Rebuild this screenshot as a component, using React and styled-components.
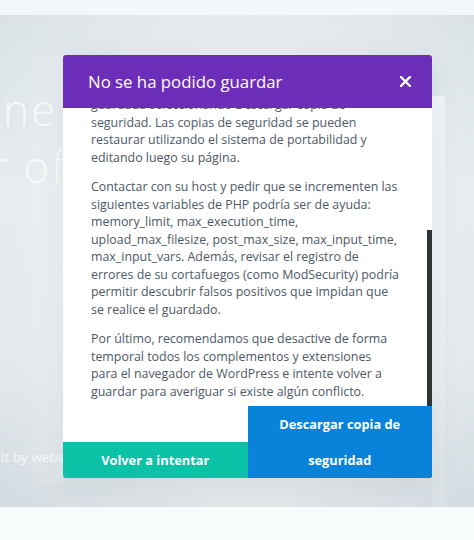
import React, { useLayoutEffect, useRef } from 'react'
import styled, { createGlobalStyle } from 'styled-components'

const GlobalStyle = createGlobalStyle`
  html, body {
    margin: 0;
    padding: 0;
  }
  body {
    width: 474px;
    height: 540px;
    overflow: hidden;
    background: #f6f9fb;
    font-family: "Open Sans", "Noto Sans", sans-serif;
  }
`

const Page = styled.div`
  width: 474px;
  height: 540px;
  padding-top: 15px;
  box-sizing: border-box;
  background: linear-gradient(180deg, #f3f7f9, #f8fbfc);
`

const Screen = styled.section`
  position: relative;
  height: 492px;
  overflow: hidden;
  display: flex;
  flex-direction: column;
  background:
    linear-gradient(180deg, rgba(244, 249, 251, 0.75), rgba(244, 249, 251, 0.1)) 432px 81px / 13px 410px no-repeat,
    linear-gradient(90deg, rgba(255, 255, 255, 0), rgba(255, 255, 255, 0.18)) 25px 40px / 38px 430px no-repeat,
    linear-gradient(90deg, rgba(255, 255, 255, 0) 0%, rgba(255, 255, 255, 0.3) 45%, rgba(255, 255, 255, 0.3) 60%, rgba(255, 255, 255, 0) 100%),
    linear-gradient(180deg, #dbe2e6 0%, #e6ecef 35%, #e3e9ed 70%, #d4dbe0 100%);
`

const Hero = styled.h1`
  margin: 0 0 0 ${p => p.$shift}px;
  padding-top: 66px;
  font-size: 44px;
  line-height: 57px;
  font-weight: 300;
  letter-spacing: 2px;
  color: rgba(255, 255, 255, 0.75);
  white-space: nowrap;
`

const HeroLine = styled.span`
  display: block;
  margin-left: ${p => p.$indent || 0}px;
`

const Credit = styled.p`
  margin: auto 0 0 1px;
  padding-bottom: 40px;
  font-size: 13.5px;
  line-height: 20px;
  color: rgba(255, 255, 255, 0.8);
  white-space: nowrap;
`

const Modal = styled.div`
  position: absolute;
  top: 40px;
  left: 63px;
  width: 369px;
  height: 423px;
  display: flex;
  flex-direction: column;
  background: #fff;
  border-radius: 3px;
  overflow: hidden;
  box-shadow: 0 6px 30px rgba(40, 60, 80, 0.08);
`

const Header = styled.header`
  flex: 0 0 53px;
  display: flex;
  align-items: center;
  justify-content: space-between;
  padding: 0 21px 0 25px;
  background: #6c2eb9;
`

const Title = styled.h3`
  margin: 0;
  font-size: 16.8px;
  font-weight: 500;
  color: #fff;
`

const Close = styled.button`
  display: flex;
  padding: 0;
  border: 0;
  background: none;
  cursor: pointer;
`

const Body = styled.div`
  position: relative;
  flex: 1;
  min-height: 0;
`

const Scroller = styled.div`
  height: 100%;
  overflow-y: auto;
  box-sizing: border-box;
  padding: 12px 33px 78px 28px;
  scrollbar-width: none;

  &::-webkit-scrollbar {
    display: none;
  }
`

// headless browsers hide real scrollbars, so the thumb is drawn on top
const Thumb = styled.div`
  position: absolute;
  right: 0;
  top: 122px;
  bottom: 0;
  width: 5px;
  background: #2f3337;
`

const Text = styled.p`
  margin: 0 0 12px;
  font-size: 12.4px;
  font-weight: 500;
  line-height: 17.5px;
  color: #4c5866;

  &:last-child {
    margin-bottom: 0;
  }
`

const Actions = styled.div`
  position: absolute;
  left: 0;
  right: 0;
  bottom: 0;
  display: flex;
  align-items: flex-end;
`

const Action = styled.button`
  flex: 1 1 50%;
  padding: 0 20px;
  border: 0;
  background: ${p => p.$color};
  color: #fff;
  font-family: inherit;
  font-size: 12.8px;
  font-weight: 700;
  line-height: 36px;
  text-align: center;
  cursor: pointer;
`

function CloseIcon() {
  return (
    <svg width="11" height="11" viewBox="0 0 11 11">
      <path d="M1 1 L10 10 M10 1 L1 10" stroke="#fff" strokeWidth="2.4" strokeLinecap="square" />
    </svg>
  )
}

export default function App() {
  const scrollRef = useRef(null)

  useLayoutEffect(() => {
    const el = scrollRef.current
    if (el) el.scrollTop = el.scrollHeight
  }, [])

  return (
    <Page>
      <GlobalStyle />
      <Screen>
        <Hero $shift={3}>
          <HeroLine>ne</HeroLine>
          <HeroLine $indent={-12}>r of</HeroLine>
        </Hero>
        <Credit>lt by website</Credit>

        <Modal>
          <Header>
            <Title>No se ha podido guardar</Title>
            <Close aria-label="Cerrar">
              <CloseIcon />
            </Close>
          </Header>
          <Body>
            <Scroller ref={scrollRef}>
              <Text>
                Se ha producido un problema al guardar la página. Varios
                problemas pueden hacer que no se guarde correctamente, como la
                falta de recursos en el servidor, el bloqueo del cortafuegos,
                conflictos entre complementos o errores del servidor. Puede
                intentar guardar de nuevo haciendo clic en Volver a intentar, o
                bien puede descargar una copia de seguridad de la página no
                <br />
                guardada seleccionando Descargar copia de seguridad. Las copias
                de seguridad se pueden restaurar utilizando el sistema de
                portabilidad y editando luego su página.
              </Text>
              <Text>
                Contactar con su host y pedir que se incrementen las siguientes
                variables de PHP podría ser de ayuda: memory_limit,
                max_execution_time, upload_max_filesize, post_max_size,
                max_input_time, max_input_vars. Además, revisar el registro de
                errores de su cortafuegos (como ModSecurity) podría permitir
                descubrir falsos positivos que impidan que se realice el
                guardado.
              </Text>
              <Text>
                Por último, recomendamos que desactive de forma temporal todos
                los complementos y extensiones para el navegador de WordPress e
                intente volver a guardar para averiguar si existe algún
                conflicto.
              </Text>
            </Scroller>
            <Thumb />
            <Actions>
              <Action $color="#0bc1a6">Volver a intentar</Action>
              <Action $color="#0983d9">Descargar copia de seguridad</Action>
            </Actions>
          </Body>
        </Modal>
      </Screen>
    </Page>
  )
}
